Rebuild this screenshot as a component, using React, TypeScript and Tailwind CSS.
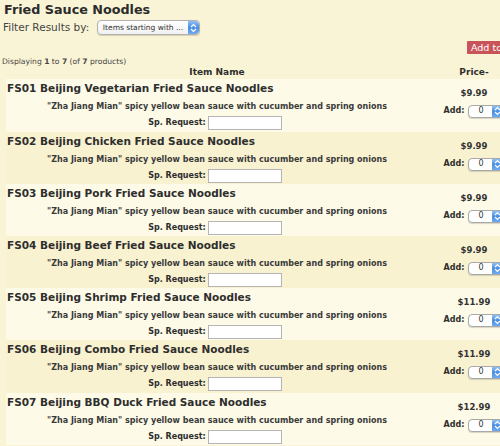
import React from 'react';

interface Product {
  code: string;
  name: string;
  price: string;
}

const products: Product[] = [
  { code: 'FS01', name: 'Beijing Vegetarian Fried Sauce Noodles', price: '$9.99' },
  { code: 'FS02', name: 'Beijing Chicken Fried Sauce Noodles', price: '$9.99' },
  { code: 'FS03', name: 'Beijing Pork Fried Sauce Noodles', price: '$9.99' },
  { code: 'FS04', name: 'Beijing Beef Fried Sauce Noodles', price: '$9.99' },
  { code: 'FS05', name: 'Beijing Shrimp Fried Sauce Noodles', price: '$11.99' },
  { code: 'FS06', name: 'Beijing Combo Fried Sauce Noodles', price: '$11.99' },
  { code: 'FS07', name: 'Beijing BBQ Duck Fried Sauce Noodles', price: '$12.99' },
];

const Stepper: React.FC = () => (
  <div className="flex h-full w-[11px] items-center justify-center rounded-r-[4px] bg-gradient-to-b from-[#8fc0f5] via-[#4a8fe0] to-[#6eaaf0]">
    <svg width="7" height="10" viewBox="0 0 7 10">
      <path d="M1 4 L3.5 1.5 L6 4" stroke="#fff" strokeWidth="1.2" fill="none" />
      <path d="M1 6 L3.5 8.5 L6 6" stroke="#fff" strokeWidth="1.2" fill="none" />
    </svg>
  </div>
);

const QtySelect: React.FC = () => (
  <div className="flex h-[13px] w-[36px] items-stretch rounded-[4px] border border-[#a9a9a9] bg-white shadow-[0_1px_1px_rgba(0,0,0,0.15)]">
    <div className="flex flex-1 items-center justify-center text-[8px] leading-none text-[#333]">0</div>
    <Stepper />
  </div>
);

const ProductRow: React.FC<{ p: Product; odd: boolean; h: string }> = ({ p, odd, h }) => (
  <div className={`flex ${h} ${odd ? 'bg-[#fdfae7]' : 'bg-[#f9f2d1]'}`}>
    <div className="flex w-[422px] flex-col">
      <div className="mt-[2px] pl-[1px] text-[10.5px] font-bold leading-[15px] text-[#2e2e2e]">
        {p.code} {p.name}
      </div>
      <div className="mt-[5px] text-center text-[8px] font-bold leading-[11px] text-[#3a3a3a]">
        "Zha Jiang Mian" spicy yellow bean sauce with cucumber and spring onions
      </div>
      <div className="mt-[4px] flex items-center justify-center gap-[2px] pr-[4px]">
        <span className="text-[8px] font-bold text-[#2e2e2e]">Sp. Request:</span>
        <div className="h-[14px] w-[74px] border border-[#b5b5b5] bg-white" />
      </div>
    </div>
    <div className="flex flex-1 flex-col items-center pt-[8px] pl-[8px]">
      <div className="text-[8.5px] font-bold leading-[12px] text-[#333]">{p.price}</div>
      <div className="mt-[6px] flex items-center gap-[4px]">
        <span className="text-[8px] font-bold text-[#2e2e2e]">Add:</span>
        <QtySelect />
      </div>
    </div>
  </div>
);

const heights = ['h-[53px]', 'h-[52px]', 'h-[52px]', 'h-[52px]', 'h-[52px]', 'h-[53px]', 'h-[52px]'];

export default function App() {
  return (
    <div className="h-[446px] w-[500px] overflow-hidden bg-[#faf4d6] font-['DejaVu_Sans',Verdana,sans-serif] text-[#333]">
      <div className="w-[512px]">
        <h1 className="pl-[4px] pt-[1px] text-[12.75px] font-bold leading-[18px] text-[#2b2b2b]">Fried Sauce Noodles</h1>
        <div className="mt-[1px] flex items-center">
          <span className="w-[97px] pl-[3px] text-[10.5px] text-[#444]">Filter Results by:</span>
          <div className="flex h-[15px] w-[103px] items-stretch rounded-[4px] border border-[#b0b0b0] bg-gradient-to-b from-white to-[#f1f1f1] shadow-[0_1px_1px_rgba(0,0,0,0.15)]">
            <div className="flex flex-1 items-center justify-center text-[7.5px] leading-none text-[#333]">Items starting with ...</div>
            <Stepper />
          </div>
        </div>
        <div className="mt-[5px] flex pl-[467px]">
          <span className="whitespace-nowrap rounded-[1px] bg-[#c8545a] px-[4px] text-[9.5px] leading-[13px] text-white">Add to Cart</span>
        </div>
        <div className="mt-[2px] pl-[2px] text-[7.6px] leading-[11px] text-[#444]">
          Displaying <b>1</b> to <b>7</b> (of <b>7</b> products)
        </div>
        <div className="flex h-[12px] pl-[6px] text-[9px] font-bold leading-[11px] text-[#2e2e2e]">
          <div className="w-[422px] text-center">Item Name</div>
          <div className="flex-1 pl-[8px] text-center">Price-</div>
        </div>
        <div className="pl-[6px]">
          {products.map((p, i) => (
            <ProductRow key={p.code} p={p} odd={i % 2 === 0} h={heights[i]} />
          ))}
        </div>
      </div>
    </div>
  );
}
